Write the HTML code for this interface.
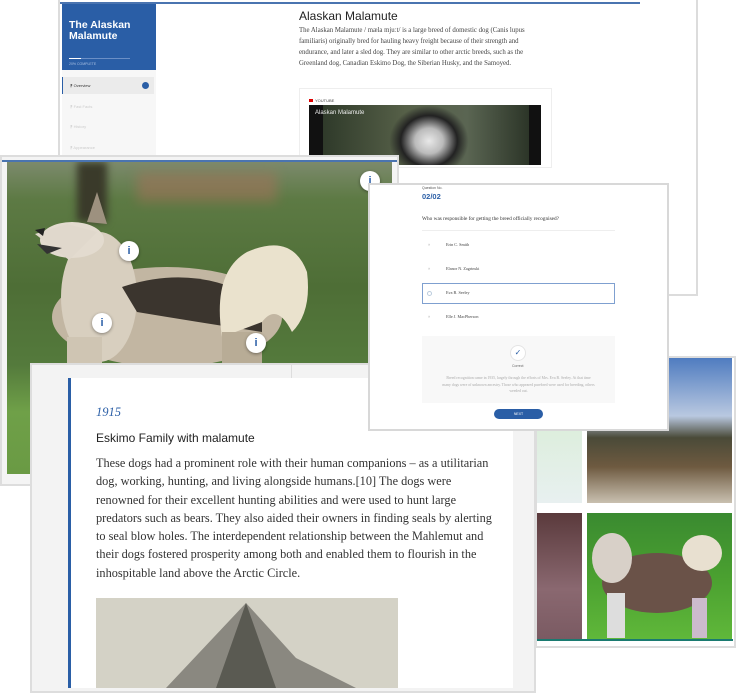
<!DOCTYPE html>
<html><head><style>
*{margin:0;padding:0;box-sizing:border-box}
body{width:736px;height:686px;position:relative;overflow:hidden;background:#fff;font-family:"Liberation Serif",serif}
.abs{position:absolute}
.sans{font-family:"Liberation Sans",sans-serif}
.info{position:absolute;width:20px;height:20px;border-radius:50%;background:#fff;color:#2a5ea8;font:bold 11px "Liberation Sans",sans-serif;text-align:center;line-height:20px;box-shadow:0 1px 3px rgba(0,0,0,.4)}
</style></head><body>

<!-- back panel -->
<div class="abs" style="left:58px;top:0;width:640px;height:296px;background:#fff;border:2px solid #dcdcdc;border-top:none">
  <div class="abs" style="left:0;top:2px;width:580px;height:2px;background:#4a74b0"></div>
</div>
<div class="abs" style="left:62px;top:4px;width:94px;height:66px;background:#2a5ea6"></div>
<div class="abs sans" style="left:69px;top:20px;color:#fff;font-weight:bold;font-size:10.5px;line-height:11px">The Alaskan<br>Malamute</div>
<div class="abs" style="left:69px;top:58px;width:61px;height:1px;background:#6b8fc6"></div>
<div class="abs" style="left:69px;top:58px;width:12px;height:1px;background:#fff"></div>
<div class="abs sans" style="left:69px;top:62px;color:#a9c0e2;font-size:3.5px">20% COMPLETE</div>
<div class="abs" style="left:62px;top:70px;width:94px;height:86px;background:#f7f7f7"></div>
<div class="abs" style="left:62px;top:77px;width:92px;height:17px;background:#ebebeb;border-left:1px solid #2a5ea6"></div>
<div class="abs sans" style="left:70px;top:83px;font-size:4px;color:#333">⁋ Overview</div>
<div class="abs" style="left:142px;top:82px;width:7px;height:7px;border-radius:50%;background:#2a5ea6"></div>
<div class="abs sans" style="left:70px;top:104px;font-size:4px;color:#ccc">⁋ Fast Facts</div>
<div class="abs sans" style="left:70px;top:124px;font-size:4px;color:#ccc">⁋ History</div>
<div class="abs sans" style="left:70px;top:145px;font-size:4px;color:#ccc">⁋ Appearance</div>
<div class="abs sans" style="left:299px;top:9px;font-size:12px;color:#222">Alaskan Malamute</div>
<div class="abs" style="left:299px;top:25px;width:250px;font-size:6.8px;line-height:11px;color:#444">The Alaskan Malamute / mæla mjuːt/ is a large breed of domestic dog (Canis lupus familiaris) originally bred for hauling heavy freight because of their strength and endurance, and later a sled dog. They are similar to other arctic breeds, such as the Greenland dog, Canadian Eskimo Dog, the Siberian Husky, and the Samoyed.</div>
<div class="abs" style="left:299px;top:88px;width:253px;height:80px;border:1px solid #eee;background:#fff"></div>
<div class="abs" style="left:309px;top:99px;width:4px;height:3px;background:#d00"></div>
<div class="abs sans" style="left:315px;top:98px;font-size:4px;color:#444">YOUTUBE</div>
<div class="abs" style="left:309px;top:105px;width:232px;height:60px;background:#111">
  <div class="abs" style="left:14px;top:0;width:206px;height:60px;background:linear-gradient(90deg,#2f3a2a,#566048 40%,#5a6552 70%,#2c3528)"></div>
  <div class="abs" style="left:80px;top:0;width:80px;height:60px;background:radial-gradient(ellipse at 50% 60%,#e8e8e8 0,#bbb 25%,#222 50%,transparent 70%)"></div>
  <div class="abs sans" style="left:6px;top:5px;font-size:6px;color:#eee">Alaskan Malamute</div>
</div>

<!-- photo panel -->
<div class="abs" style="left:0;top:155px;width:399px;height:331px;background:#f4f4f4;border:2px solid #ddd"></div>
<div class="abs" style="left:2px;top:160px;width:395px;height:2px;background:#4a74b0"></div>
<div class="abs" style="left:7px;top:162px;width:385px;height:312px;background:linear-gradient(180deg,#7c8a6c 0,#5d7a44 12%,#4e6e36 40%,#547a3c 65%,#6fa048 80%,#6a9a44 100%);overflow:hidden">
  <div class="abs" style="left:130px;top:10px;width:140px;height:30px;background:#a8705a;opacity:.5;filter:blur(6px)"></div>
  <div class="abs" style="left:70px;top:0;width:30px;height:60px;background:#3a3a2a;filter:blur(4px)"></div>
  <svg class="abs" style="left:0;top:0" width="385" height="312">
    <ellipse cx="160" cy="155" rx="115" ry="50" fill="#c2b6a2"/>
    <ellipse cx="92" cy="135" rx="38" ry="65" fill="#d8cfbf"/>
    <ellipse cx="65" cy="78" rx="32" ry="18" fill="#e3dbcf"/>
    <path d="M28 72 L60 62 L90 70 L62 98 Z" fill="#e0d8cc"/>
    <path d="M28 68 L38 66 L36 74 Z" fill="#222"/>
    <path d="M30 82 L55 86 L40 92 Z" fill="#333"/>
    <path d="M80 60 L90 30 L100 62 Z" fill="#9d917f"/>
    <path d="M115 125 Q190 100 255 140 L255 170 Q190 160 130 150 Z" fill="#3b352e"/>
    <path d="M215 175 Q205 110 240 90 Q285 70 300 110 Q305 150 285 170 Q270 140 255 160 Z" fill="#eae2cd"/>
    <rect x="60" y="175" width="35" height="40" fill="#cfc5b3"/>
    <rect x="215" y="170" width="40" height="50" fill="#b8ac96"/>
  </svg>
</div>
<div class="info" style="left:119px;top:241px">i</div>
<div class="info" style="left:92px;top:313px">i</div>
<div class="info" style="left:246px;top:333px">i</div>
<div class="info" style="left:360px;top:171px">i</div>

<!-- gallery -->
<div class="abs" style="left:535px;top:356px;width:201px;height:292px;background:#fff;border:2px solid #ddd"></div>
<div class="abs" style="left:537px;top:358px;width:45px;height:145px;background:linear-gradient(180deg,#ccc 0,#ddeedd 50%,#e8f0f0 100%)"></div>
<div class="abs" style="left:587px;top:358px;width:145px;height:145px;background:linear-gradient(180deg,#4f7cc0 0,#b9c8e0 40%,#4a4a38 55%,#6e5a40 75%,#c9c0b0 100%)"></div>
<div class="abs" style="left:537px;top:513px;width:45px;height:127px;background:linear-gradient(180deg,#5a3a3c,#8a6870 60%,#7a5a62)"></div>
<div class="abs" style="left:587px;top:513px;width:145px;height:127px;background:linear-gradient(180deg,#3a8a30 0,#4aa030 50%,#60b83a 100%)">
  <svg width="145" height="127"><ellipse cx="70" cy="70" rx="55" ry="30" fill="#6a5248"/><ellipse cx="25" cy="45" rx="20" ry="25" fill="#d8d0c8"/><ellipse cx="115" cy="40" rx="20" ry="18" fill="#e8e0d0"/><rect x="20" y="80" width="18" height="45" fill="#ddd"/><rect x="105" y="85" width="15" height="40" fill="#cbc"/></svg>
</div>
<div class="abs" style="left:537px;top:639px;width:196px;height:2px;background:#1a7a70"></div>

<!-- text panel -->
<div class="abs" style="left:30px;top:363px;width:506px;height:330px;background:#f3f3f3;border:2px solid #ddd"></div>
<div class="abs" style="left:291px;top:365px;width:1px;height:13px;background:#ddd"></div>
<div class="abs" style="left:68px;top:378px;width:445px;height:310px;background:#fff;border-left:3px solid #2a5ea6"></div>
<div class="abs" style="left:96px;top:405px;font-style:italic;font-size:12.5px;color:#2a5ea6">1915</div>
<div class="abs sans" style="left:96px;top:431px;font-size:12px;color:#222">Eskimo Family with malamute</div>
<div class="abs" style="left:96px;top:454px;width:400px;font-size:12.3px;line-height:18.3px;color:#333">These dogs had a prominent role with their human companions – as a utilitarian dog, working, hunting, and living alongside humans.[10] The dogs were renowned for their excellent hunting abilities and were used to hunt large predators such as bears. They also aided their owners in finding seals by alerting to seal blow holes. The interdependent relationship between the Mahlemut and their dogs fostered prosperity among both and enabled them to flourish in the inhospitable land above the Arctic Circle.</div>
<div class="abs" style="left:96px;top:598px;width:302px;height:90px;background:#d4d2c6">
  <svg width="302" height="90"><path d="M70 90 L150 5 L200 60 L260 90 Z" fill="#8a8880"/><path d="M150 5 L120 90 L180 90 Z" fill="#5a5a52"/></svg>
</div>

<!-- quiz -->
<div class="abs" style="left:368px;top:183px;width:301px;height:248px;background:#fff;border:2px solid #d8d8d8"></div>
<div class="abs sans" style="left:422px;top:186px;font-size:3.5px;color:#555">Question No.</div>
<div class="abs sans" style="left:422px;top:192px;font-size:7.5px;font-weight:bold;color:#2a5ea6">02/02</div>
<div class="abs" style="left:422px;top:216px;font-size:5.3px;color:#333">Who was responsible for getting the breed officially recognised?</div>
<div class="abs" style="left:422px;top:230px;width:193px;height:1px;background:#eee"></div>
<div class="abs" style="left:428px;top:242px;font-size:4px;color:#888">×</div><div class="abs" style="left:446px;top:242px;font-size:4.2px;color:#444">Erin C. Smith</div>
<div class="abs" style="left:428px;top:266px;font-size:4px;color:#888">×</div><div class="abs" style="left:446px;top:266px;font-size:4.2px;color:#444">Elanor N. Zagrinski</div>
<div class="abs" style="left:422px;top:283px;width:193px;height:21px;border:1px solid #7fa0d0"></div>
<div class="abs" style="left:427px;top:291px;width:5px;height:5px;border:1px solid #bcd;border-radius:50%"></div><div class="abs" style="left:446px;top:290px;font-size:4.2px;color:#444">Eva B. Seeley</div>
<div class="abs" style="left:428px;top:314px;font-size:4px;color:#888">×</div><div class="abs" style="left:446px;top:314px;font-size:4.2px;color:#444">Elle J. MacPherson</div>
<div class="abs" style="left:422px;top:336px;width:193px;height:67px;background:#f8f8f8"></div>
<div class="abs" style="left:510px;top:345px;width:16px;height:16px;border-radius:50%;background:#fff;border:1px solid #e4e4e4;color:#2a5ea6;font-size:8px;text-align:center;line-height:14px">✓</div>
<div class="abs sans" style="left:512px;top:364px;font-size:3.5px;color:#666">Correct</div>
<div class="abs" style="left:442px;top:375px;width:153px;font-size:3.8px;line-height:6.7px;color:#aaa;text-align:center">Breed recognition came in 1935, largely through the efforts of Mrs. Eva B. Seeley. At that time many dogs were of unknown ancestry. Those who appeared purebred were used for breeding, others weeded out.</div>
<div class="abs sans" style="left:494px;top:409px;width:49px;height:10px;border-radius:5px;background:#2a5ea6;color:#fff;font-size:3.5px;text-align:center;line-height:10px">NEXT</div>

</body></html>
